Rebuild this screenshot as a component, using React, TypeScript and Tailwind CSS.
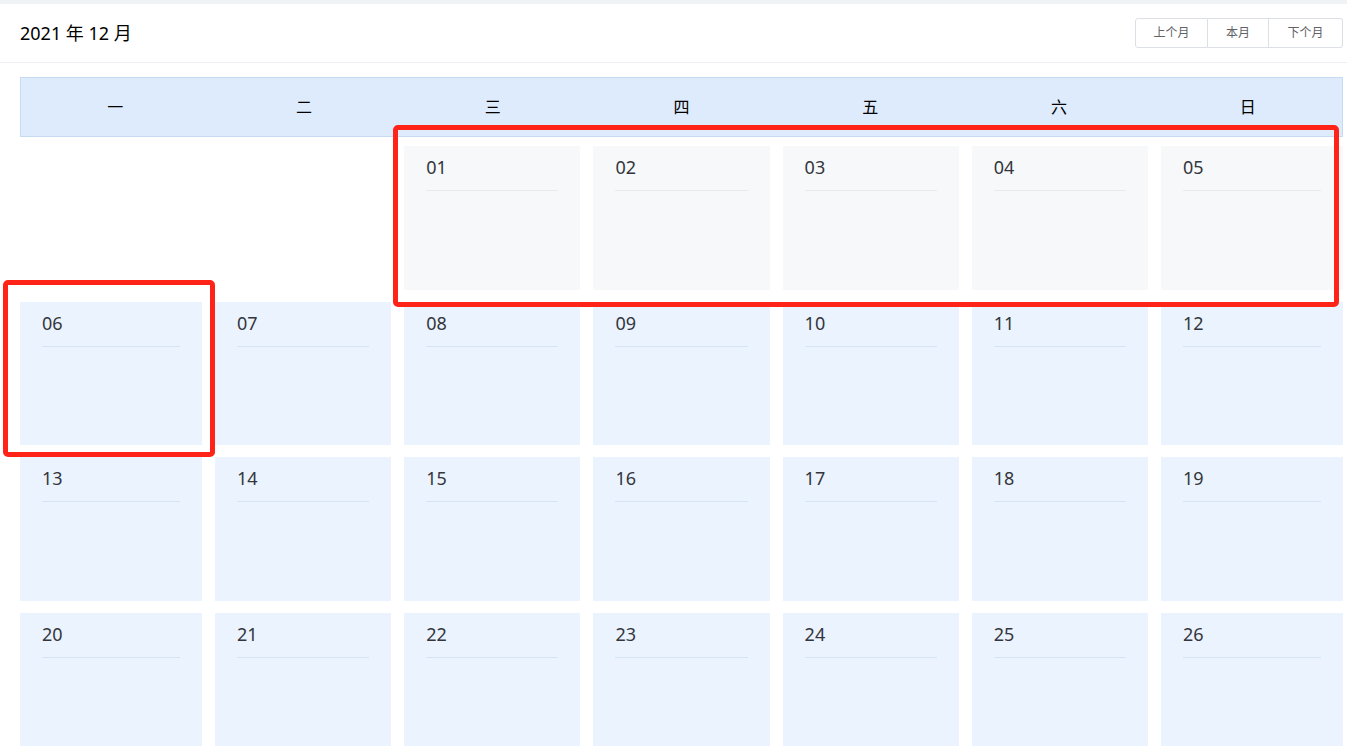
import React from 'react';

const WEEK_DAYS = ['一', '二', '三', '四', '五', '六', '日'];

// Dec 2021 starts on a Wednesday
const LEADING_BLANKS = 2;
const DAYS_IN_MONTH = 31;

const pad = (n: number) => (n < 10 ? `0${n}` : `${n}`);

const DayCell: React.FC<{ day: number; muted: boolean }> = ({ day, muted }) => (
  <div className={`h-[143.5px] px-[22px] pt-[6px] ${muted ? 'bg-[#f7f8fa]' : 'bg-[#ebf3fe]'}`}>
    <div
      className={`pb-[8px] text-[18px] leading-[30px] text-[#33363c] border-b ${
        muted ? 'border-[#e7e9ed]' : 'border-[#d5e3f7]'
      }`}
    >
      {pad(day)}
    </div>
  </div>
);

const App: React.FC = () => {
  const cells: (number | null)[] = [
    ...Array.from({ length: LEADING_BLANKS }, () => null),
    ...Array.from({ length: DAYS_IN_MONTH }, (_, i) => i + 1),
  ];

  return (
    <div
      className="relative min-h-screen bg-[#f0f3f5] pt-[4px]"
      style={{ fontFamily: '"Microsoft YaHei", "Noto Sans", "Noto Sans CJK SC", sans-serif' }}
    >
      <div className="bg-white min-h-screen">
        <header className="flex items-center justify-between pl-[20px] pr-[4px] h-[59px] border-b border-[#ebeef5]">
          <div className="text-[18px] text-black">2021 年 12 月</div>
          <div className="flex">
            <button className="h-[30px] w-[73px] text-[12px] text-[#606266] border border-[#dcdfe6] rounded-l-[3px] bg-white">
              上个月
            </button>
            <button className="h-[30px] w-[61px] text-[12px] text-[#606266] border border-l-0 border-[#dcdfe6] bg-white">
              本月
            </button>
            <button className="h-[30px] w-[74px] text-[12px] text-[#606266] border border-l-0 border-[#dcdfe6] rounded-r-[3px] bg-white">
              下个月
            </button>
          </div>
        </header>

        <div className="pl-[20px] pr-[4px] pt-[14px]">
          <div className="grid grid-cols-7 h-[60px] bg-[#deebfc] border border-[#c7daf3]">
            {WEEK_DAYS.map(d => (
              <div key={d} className="flex items-center justify-center text-[16px] text-black">
                {d}
              </div>
            ))}
          </div>

          <div className="grid grid-cols-[182px_repeat(5,minmax(0,1fr))_182px] gap-x-[13px] gap-y-[12px] pt-[9px] pb-[20px]">
            {cells.map((day, i) =>
              day === null ? (
                <div key={`blank-${i}`} className="h-[143.5px]" />
              ) : (
                <DayCell key={day} day={day} muted={day <= 5} />
              )
            )}
          </div>
        </div>
      </div>

      {/* annotation boxes */}
      <div className="absolute left-[393px] top-[125px] w-[946px] h-[182px] border-[5px] border-[#ff2318] rounded-[5px] pointer-events-none" />
      <div className="absolute left-[3px] top-[280px] w-[212px] h-[177px] border-[5px] border-[#ff2318] rounded-[5px] pointer-events-none" />
    </div>
  );
};

export default App;
